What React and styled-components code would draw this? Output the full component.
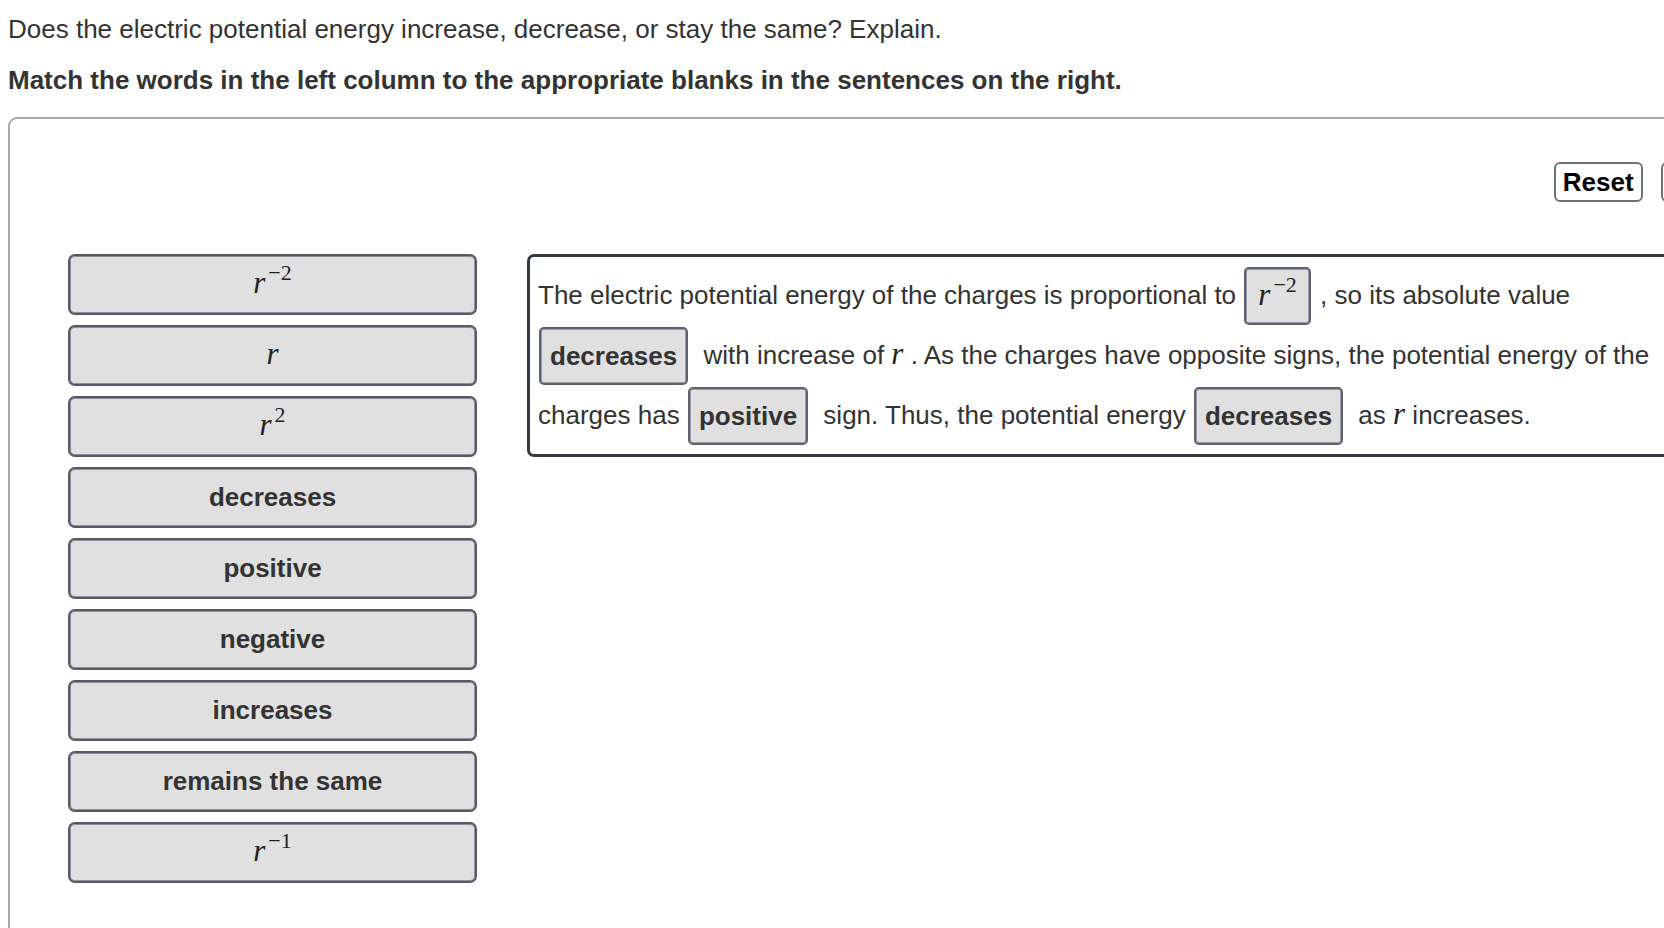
import React from "react";
import styled, { createGlobalStyle } from "styled-components";

const GlobalStyle = createGlobalStyle`
  html, body {
    margin: 0;
    padding: 0;
    overflow: hidden;
    background: #fff;
  }
  body {
    font-family: "Liberation Sans", Arial, Helvetica, sans-serif;
    color: #333;
  }
`;

const TILES = [
  { math: true, base: "r", sup: "−2" },
  { math: true, base: "r" },
  { math: true, base: "r", sup: "2" },
  { label: "decreases" },
  { label: "positive" },
  { label: "negative" },
  { label: "increases" },
  { label: "remains the same" },
  { math: true, base: "r", sup: "−1" },
];

function Math({ base, sup }) {
  return (
    <MathWrap>
      <Var>{base}</Var>
      {sup && <Sup>{sup}</Sup>}
    </MathWrap>
  );
}

function App() {
  return (
    <>
      <GlobalStyle />
      <Page>
        <Question>
          Does the electric potential energy increase, decrease, or stay the
          same? Explain.
        </Question>
        <Instruction>
          Match the words in the left column to the appropriate blanks in the
          sentences on the right.
        </Instruction>

        <Panel>
          <Toolbar>
            <ToolButton>Reset</ToolButton>
            <ToolButton>Help</ToolButton>
          </Toolbar>

          <Board>
            <TileColumn>
              {TILES.map((t, i) => (
                <Tile key={i} bold={!t.math}>
                  {t.math ? <Math base={t.base} sup={t.sup} /> : t.label}
                </Tile>
              ))}
            </TileColumn>

            <SentenceBox>
              <Sentence>
                The electric potential energy of the charges is proportional to{" "}
                <Blank>
                  <Math base="r" sup="−2" />
                </Blank>{" "}
                , so its absolute value
                <br />
                <Blank bold>decreases</Blank> with increase of <Var>r</Var> .
                As the charges have opposite signs, the potential energy of the
                <br />
                charges has <Blank bold>positive</Blank> sign. Thus, the
                potential energy <Blank bold>decreases</Blank> as{" "}
                <Var>r</Var> increases.
              </Sentence>
            </SentenceBox>
          </Board>
        </Panel>
      </Page>
    </>
  );
}

const Page = styled.div`
  padding: 11px 0 0 8px;
  width: 1800px;
`;

const Question = styled.p`
  margin: 0;
  font-size: 26px;
  line-height: 36px;
  color: #333;
`;

const Instruction = styled.p`
  margin: 15px 0 0;
  font-size: 26px;
  line-height: 36px;
  font-weight: bold;
  color: #333;
`;

const Panel = styled.div`
  margin-top: 19px;
  width: 1780px;
  box-sizing: border-box;
  border: 2px solid #aaa;
  border-radius: 9px;
  padding: 43px 51px 80px 58px;
`;

const Toolbar = styled.div`
  display: flex;
  justify-content: flex-end;
  gap: 18px;
`;

const ToolButton = styled.button`
  box-sizing: border-box;
  height: 40px;
  padding: 0 7px;
  border: 2px solid #6b7378;
  border-radius: 6px;
  background: #fff;
  font-family: "Liberation Sans", Arial, sans-serif;
  font-size: 26px;
  font-weight: bold;
  line-height: 36px;
  color: #000;
`;

const Board = styled.div`
  display: flex;
  align-items: flex-start;
  gap: 50px;
  margin-top: 52px;
  margin-right: -40px;
`;

const TileColumn = styled.div`
  display: flex;
  flex-direction: column;
  gap: 10px;
  width: 409px;
  flex: none;
`;

const Tile = styled.div`
  box-sizing: border-box;
  height: 61px;
  display: flex;
  align-items: center;
  justify-content: center;
  background: #e0e0e0;
  border: 2px solid #575965;
  border-radius: 7px;
  box-shadow: inset 0 0 0 1px #8d8f9b;
  font-size: 26px;
  line-height: 55px;
  font-weight: ${(p) => (p.bold ? "bold" : "normal")};
  color: #333;
  white-space: nowrap;
`;

const SentenceBox = styled.div`
  flex: 1;
  box-sizing: border-box;
  border: 3px solid #343a3f;
  border-radius: 7px;
  padding: 8px 8px 9px;
`;

const Sentence = styled.p`
  margin: 0;
  font-size: 26px;
  line-height: 60px;
  color: #333;
  white-space: nowrap;
`;

const Blank = styled.span`
  display: inline-block;
  box-sizing: border-box;
  height: 58px;
  padding: 0 ${(p) => (p.bold ? "9px" : "12px")};
  margin: -5px ${(p) => (p.bold ? "8px" : "2px")} -3px 1px;
  vertical-align: middle;
  background: #e0e0e0;
  border: 2px solid #5f6170;
  border-radius: 5px;
  box-shadow: inset 0 0 0 1px #9a9ca6;
  font-weight: ${(p) => (p.bold ? "bold" : "normal")};
  line-height: 54px;
  color: #333;
`;

const MathWrap = styled.span`
  white-space: nowrap;
  vertical-align: 2px;
`;

const Var = styled.span`
  font-family: "Liberation Serif", "Times New Roman", serif;
  font-style: italic;
  font-size: 31px;
  line-height: 1;
  color: #222;
`;

const Sup = styled.span`
  font-family: "Liberation Serif", "Times New Roman", serif;
  font-size: 22px;
  line-height: 1;
  vertical-align: 13px;
  margin-left: 3px;
  color: #222;
`;

export default App;
